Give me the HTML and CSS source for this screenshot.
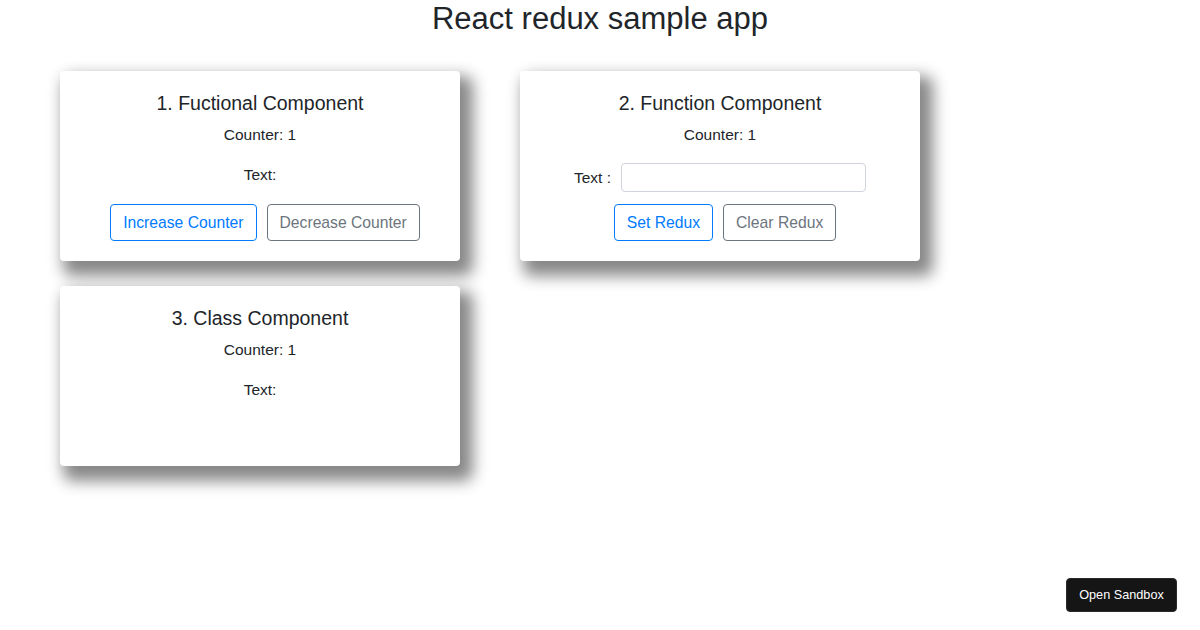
FILE: index.html
```html
<!DOCTYPE html>
<html>
<head>
<meta charset="utf-8">
<link rel="stylesheet" href="styles.css">
</head>
<body>
<h1 class="app-title">React redux sample app</h1>
<div class="cards">
  <div class="card">
    <h5 class="card-title">1. Fuctional Component</h5>
    <p class="line">Counter: 1</p>
    <p class="line">Text: </p>
    <div class="btns">
      <button class="btn btn-primary">Increase Counter</button>
      <button class="btn btn-secondary">Decrease Counter</button>
    </div>
  </div>
  <div class="card">
    <h5 class="card-title">2. Function Component</h5>
    <p class="line">Counter: 1</p>
    <div class="field">
      <label class="field-label">Text :</label>
      <input class="field-input" type="text">
    </div>
    <div class="btns">
      <button class="btn btn-primary">Set Redux</button>
      <button class="btn btn-secondary">Clear Redux</button>
    </div>
  </div>
  <div class="card card-tall">
    <h5 class="card-title">3. Class Component</h5>
    <p class="line">Counter: 1</p>
    <p class="line">Text: </p>
  </div>
</div>
<button class="sandbox">Open Sandbox</button>
</body>
</html>
```

FILE: styles.css
```css
* { box-sizing: border-box; }
html, body { margin: 0; padding: 0; background: #fff; }
body {
  font-family: "Liberation Sans", Arial, sans-serif;
  color: #212529;
  font-size: 15.5px;
  line-height: 1.5;
  width: 1200px;
  height: 630px;
  overflow: hidden;
}
.app-title {
  margin: 0;
  text-align: center;
  font-size: 31px;
  font-weight: 400;
  line-height: 38px;
}
.cards {
  display: flex;
  flex-wrap: wrap;
  align-items: flex-start;
  gap: 25px 60px;
  width: 920px;
  margin-top: 33px;
  margin-left: 60px;
}
.card {
  width: 400px;
  display: flex;
  flex-direction: column;
  background: #fff;
  border-radius: 4px;
  box-shadow: 8px 10px 15px 5px #888;
  padding: 20px 20px 20px;
  text-align: center;
}
.card-tall { min-height: 180px; }
.card-title {
  margin: 0 0 8px;
  font-size: 19.5px;
  font-weight: 400;
  line-height: 24px;
}
.line {
  margin: 0 0 16px;
  line-height: 24px;
}
.btns {
  display: flex;
  justify-content: center;
  gap: 10px;
  margin-top: 1px;
  padding-left: 10px;
}
.btn {
  font-family: inherit;
  font-size: 15.7px;
  line-height: 24px;
  height: 37px;
  padding: 5px 12px;
  background: #fff;
  border: 1px solid;
  border-radius: 4px;
}
.btn-primary { color: #007bff; border-color: #007bff; }
.btn-secondary { color: #6c757d; border-color: #6c757d; }
.field {
  display: flex;
  justify-content: center;
  align-items: center;
  gap: 10px;
  margin: 0 0 11px 0;
}
.field-label { line-height: 24px; }
.field-input {
  width: 245px;
  height: 29px;
  border: 1px solid #ced4da;
  border-radius: 4px;
  font-family: inherit;
  font-size: 16px;
}
.sandbox {
  position: fixed;
  right: 23px;
  bottom: 18px;
  width: 111px;
  height: 34px;
  background: #151515;
  color: #fff;
  border: 1px solid #2a2a2a;
  border-radius: 4px;
  font-family: "Liberation Sans", Arial, sans-serif;
  font-size: 12.7px;
  padding: 0;
}
```
